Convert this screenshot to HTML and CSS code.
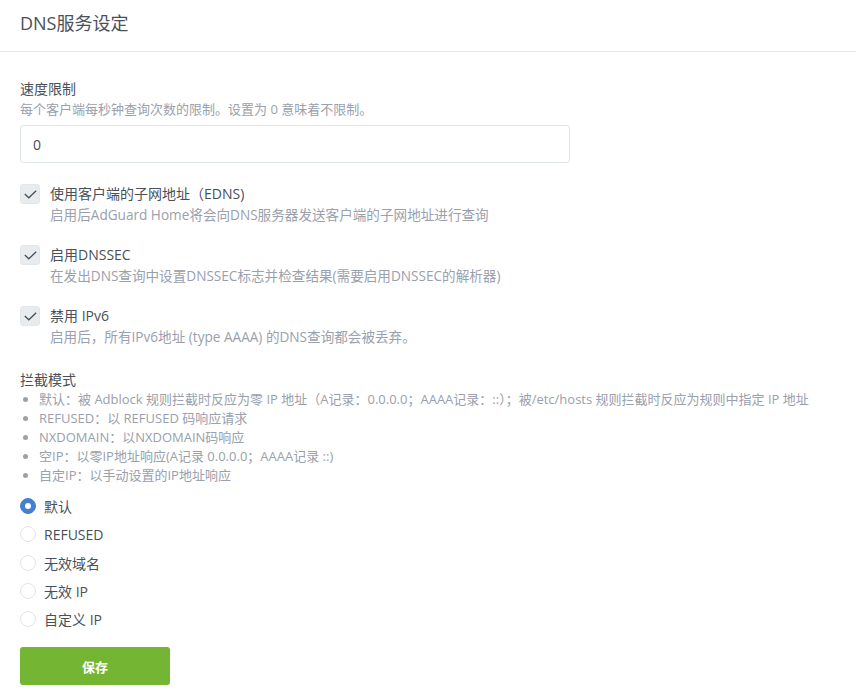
FILE: index.html
```html
<!DOCTYPE html>
<html lang="zh-CN">
<head>
<meta charset="utf-8">
<link rel="stylesheet" href="styles.css">
</head>
<body>
<div class="card">
  <div class="card-header">DNS服务设定</div>
  <div class="card-body">
    <div class="field">
      <div class="label">速度限制</div>
      <div class="desc">每个客户端每秒钟查询次数的限制。设置为 0 意味着不限制。</div>
      <input class="input" type="text" value="0">
    </div>

    <div class="check">
      <span class="box"><svg width="13" height="9" viewBox="0 0 13 9"><path d="M0.8 4 L4.8 7.8 L12.2 0.8" fill="none" stroke="#495057" stroke-width="1.3"/></svg></span>
      <div class="check-text">
        <div class="check-label">使用客户端的子网地址（EDNS)</div>
        <div class="desc">启用后AdGuard Home将会向DNS服务器发送客户端的子网地址进行查询</div>
      </div>
    </div>

    <div class="check">
      <span class="box"><svg width="13" height="9" viewBox="0 0 13 9"><path d="M0.8 4 L4.8 7.8 L12.2 0.8" fill="none" stroke="#495057" stroke-width="1.3"/></svg></span>
      <div class="check-text">
        <div class="check-label">启用DNSSEC</div>
        <div class="desc">在发出DNS查询中设置DNSSEC标志并检查结果(需要启用DNSSEC的解析器)</div>
      </div>
    </div>

    <div class="check">
      <span class="box"><svg width="13" height="9" viewBox="0 0 13 9"><path d="M0.8 4 L4.8 7.8 L12.2 0.8" fill="none" stroke="#495057" stroke-width="1.3"/></svg></span>
      <div class="check-text">
        <div class="check-label">禁用 IPv6</div>
        <div class="desc">启用后，所有IPv6地址 (type AAAA) 的DNS查询都会被丢弃。</div>
      </div>
    </div>

    <div class="mode">
      <div class="label">拦截模式</div>
      <ul class="list">
        <li>默认：被 Adblock 规则拦截时反应为零 IP 地址（A记录：0.0.0.0；AAAA记录：::）；被/etc/hosts 规则拦截时反应为规则中指定 IP 地址</li>
        <li>REFUSED：以 REFUSED 码响应请求</li>
        <li>NXDOMAIN：以NXDOMAIN码响应</li>
        <li>空IP：以零IP地址响应(A记录 0.0.0.0；AAAA记录 ::)</li>
        <li>自定IP：以手动设置的IP地址响应</li>
      </ul>
    </div>

    <div class="radios">
      <div class="radio"><span class="dot checked"></span>默认</div>
      <div class="radio"><span class="dot"></span>REFUSED</div>
      <div class="radio"><span class="dot"></span>无效域名</div>
      <div class="radio"><span class="dot"></span>无效 IP</div>
      <div class="radio"><span class="dot"></span>自定义 IP</div>
    </div>

    <button class="btn" type="button">保存</button>
  </div>
</div>
</body>
</html>
```
FILE: styles.css
```css
* { box-sizing: border-box; }
html, body { margin: 0; padding: 0; background: #fff; }
body {
  font-family: "Open Sans", "Noto Sans CJK SC", sans-serif;
  color: #495057;
  font-size: 14px;
}
.card-header {
  height: 52px;
  padding: 11px 20px 0 20px;
  font-size: 18px;
  line-height: 24px;
  color: #495057;
  border-bottom: 1px solid #e6e8ec;
}
.card-body {
  padding: 27px 20px 0 20px;
}
.label {
  font-size: 14px;
  line-height: 20px;
  color: #495057;
}
.desc {
  font-size: 13px;
  line-height: 20px;
  color: #9aa0ac;
}
.input {
  display: block;
  margin-top: 6px;
  width: 550px;
  height: 38px;
  border: 1px solid #e0e5ec;
  border-radius: 3px;
  padding: 0 12px;
  font-family: inherit;
  font-size: 14px;
  color: #495057;
  outline: none;
}
.check {
  display: flex;
  gap: 10px;
  margin-top: 21px;
}
.check + .check { margin-top: 20px; }
.box {
  width: 20px;
  height: 20px;
  flex: none;
  background: #e9ecef;
  border: 1px solid #e3e6ea;
  border-radius: 3px;
  display: flex;
  align-items: center;
  justify-content: center;
}
.check-label {
  font-size: 14px;
  line-height: 20px;
}
.check-text .desc {
  font-size: 13.6px;
  margin-top: 1px;
  line-height: 20px;
}
.mode { margin-top: 23px; }
.list {
  margin: 0;
  padding: 0 0 0 19px;
  font-size: 13px;
  line-height: 19px;
  color: #9aa0ac;
}
.list li::marker { color: #9aa0ac; }
.radios {
  margin-top: 11px;
  display: flex;
  flex-direction: column;
  gap: 8.25px;
}
.radio {
  display: flex;
  align-items: center;
  gap: 8px;
  height: 20px;
  font-size: 14px;
  color: #495057;
}
.dot {
  width: 16px;
  height: 16px;
  border-radius: 50%;
  border: 1px solid #e0e5ec;
  background: #fff;
  flex: none;
}
.dot.checked {
  background: #467fcf;
  border-color: #467fcf;
  position: relative;
}
.dot.checked::after {
  content: "";
  position: absolute;
  left: 4px; top: 4px;
  width: 6px; height: 6px;
  border-radius: 50%;
  background: #fff;
}
.btn {
  margin-top: 18px;
  width: 150px;
  height: 38px;
  background: #74b634;
  border: none;
  border-radius: 3px;
  color: #fff;
  font-family: inherit;
  font-weight: 700;
  font-size: 13px;
}
```
